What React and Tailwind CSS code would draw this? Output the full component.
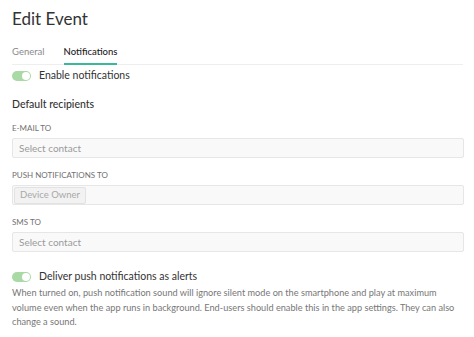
function Toggle() {
  return (
    <span className="relative inline-flex h-[10px] w-[19px] shrink-0 items-center rounded-full bg-[#a9d9a4]">
      <span className="absolute right-[1px] h-[8px] w-[8px] rounded-full bg-white" />
    </span>
  );
}

function Field({ label, children, placeholder }) {
  return (
    <div className="mt-[12px]">
      <div className="text-[8px] uppercase leading-[10px] text-[#707070]">{label}</div>
      <div className="mt-[5px] flex h-[20px] items-center rounded-[2px] border border-[#e6e6e6] bg-[#f9f9f9] px-[6px] text-[10px] text-[#9a9a9a]">
        {children || placeholder}
      </div>
    </div>
  );
}

export default function App() {
  return (
    <div
      className="h-[337px] w-[474px] overflow-hidden bg-white px-[12px] pt-[8px] text-[#333]"
      style={{ fontFamily: 'Lato, "Noto Sans", sans-serif' }}
    >
      <h1 className="text-[17px] font-normal leading-[22px] text-[#333]">Edit Event</h1>

      {/* Tabs */}
      <div className="mt-[16px] mr-[-1px] flex gap-[19px] border-b border-[#eeeeee] text-[9.5px] leading-[12px]">
        <div className="pb-[6px] text-[#8a8a8a]">General</div>
        <div className="mb-[-1px] border-b-2 border-[#3bb79c] pb-[4px] font-medium text-[#222]">Notifications</div>
      </div>

      <div className="mt-[4px] flex h-[14px] items-center gap-[8px] text-[10.5px] text-[#333]">
        <Toggle />
        <span>Enable notifications</span>
      </div>

      <div className="mt-[14px] text-[10.5px] font-medium leading-[14px] text-[#333]">Default recipients</div>

      <div className="mr-[-2px]">
        <Field label="E-mail to" placeholder="Select contact" />
        <Field label="Push notifications to">
          <span className="ml-[-5px] rounded-[2px] border border-[#e2e2e2] bg-[#f2f2f2] px-[5px] py-[1.5px] text-[9.5px] leading-[12px] text-[#a8a8a8]">
            Device Owner
          </span>
        </Field>
        <Field label="SMS to" placeholder="Select contact" />
      </div>

      <div className="mt-[18px] flex h-[14px] items-center gap-[8px] text-[10.5px] text-[#333]">
        <Toggle />
        <span>Deliver push notifications as alerts</span>
      </div>
      <p className="mt-[2px] text-[9.2px] leading-[14.5px] text-[#777]">
        When turned on, push notification sound will ignore silent mode on the smartphone and play at maximum volume even when the app runs in background. End-users should enable this in the app settings. They can also change a sound.
      </p>
    </div>
  );
}
